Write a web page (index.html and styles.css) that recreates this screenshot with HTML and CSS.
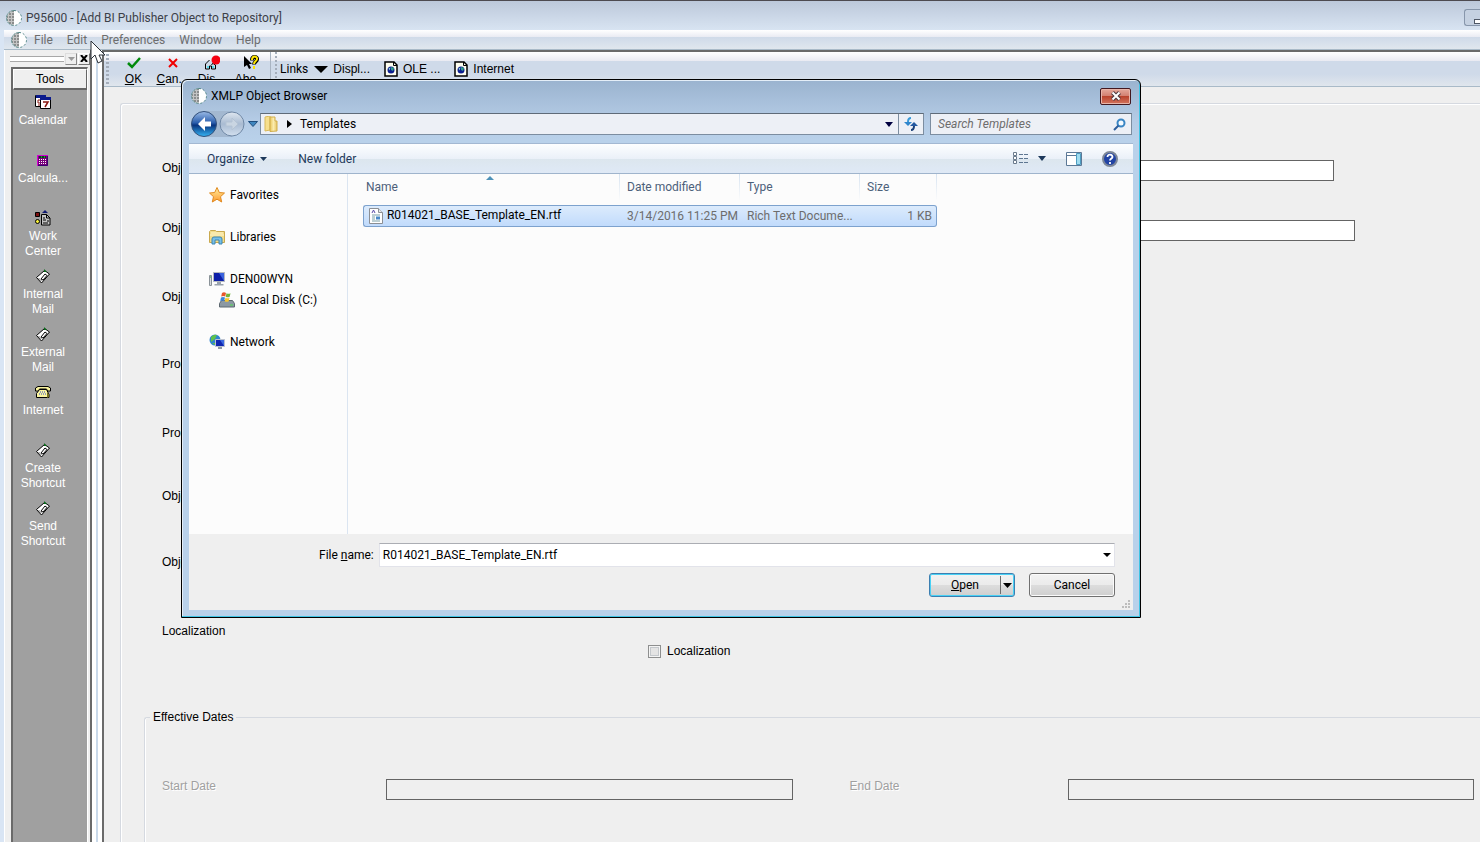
FILE: index.html
```
<!DOCTYPE html>
<html lang="en">
<head>
    <meta charset="UTF-8">
    <meta name="viewport" content="width=device-width, initial-scale=1.0">
    <title>P95600 - [Add BI Publisher Object to Repository]</title>
    <link rel="stylesheet" href="styles.css">
</head>
<body>

    <!-- Shared icons -->
    <svg class="icon-defs" aria-hidden="true">
        <defs>
            <pattern id="dots" width="3" height="3" patternUnits="userSpaceOnUse">
                <rect width="3" height="3" fill="#c4c4c4"/>
                <rect width="2" height="2" fill="#8b8d8d"/>
            </pattern>
            <linearGradient id="blueBall" x1="0" y1="0" x2="0" y2="1">
                <stop offset="0" stop-color="#9bbbe6"/>
                <stop offset="0.45" stop-color="#2b5fae"/>
                <stop offset="0.55" stop-color="#08347f"/>
                <stop offset="1" stop-color="#35b5f5"/>
            </linearGradient>
            <linearGradient id="greyBall" x1="0" y1="0" x2="0" y2="1">
                <stop offset="0" stop-color="#dfe7f0"/>
                <stop offset="0.5" stop-color="#a9bbd2"/>
                <stop offset="1" stop-color="#d3e0ef"/>
            </linearGradient>
            <linearGradient id="starFill" x1="0" y1="0" x2="0" y2="1">
                <stop offset="0" stop-color="#fff0a0"/>
                <stop offset="1" stop-color="#ff9a2e"/>
            </linearGradient>
            <linearGradient id="folderFill" x1="0" y1="0" x2="1" y2="0">
                <stop offset="0" stop-color="#e9c65c"/>
                <stop offset="0.5" stop-color="#fbecae"/>
                <stop offset="1" stop-color="#e6c465"/>
            </linearGradient>
        </defs>
        <symbol id="globe" viewBox="0 0 16 16">
            <circle cx="8" cy="8" r="7.500" fill="#fff"/>
            <path d="M8 .5a7.500 7.500 0 0 0 0 15z" fill="url(#dots)"/>
            <path d="M8 .5a7.500 7.500 0 0 0 0 15" fill="none" stroke="#5f9090" stroke-dasharray="3 1"/>
            <path d="M8 .5a7.500 7.500 0 0 1 0 15" fill="none" stroke="#4f8484" stroke-dasharray="2 2"/>
        </symbol>
        <symbol id="ticket" viewBox="0 0 16 16">
            <path d="M1.500 9.500L9.500 2.500l5 3.500l-8 9z" fill="#fff" stroke="#000"/>
            <path d="M6 11l4-5l2 1.500l-4 4.500z" fill="none" stroke="#000"/>
            <path d="M9 1l3 3h-3z" fill="#0a6a1a"/>
            <path d="M3.500 10l3 3" stroke="#777"/>
        </symbol>
        <symbol id="page" viewBox="0 0 14 16">
            <path d="M1 1h9l3 3v11h-12z" fill="#fffff0" stroke="#000" stroke-width="1.500"/>
            <path d="M9.500 1v3.500h3.500" fill="none" stroke="#000"/>
            <circle cx="7" cy="9" r="3.500" fill="#0c1d8f"/>
            <path d="M7 6l3 1l-1 3l-2-1z" fill="#2fa08a"/>
            <path d="M4.500 7.500l2-1l-1 3z" fill="#8fd4e8"/>
        </symbol>
    </svg>

    <header class="titlebar">
        <svg class="icon16"><use href="#globe"/></svg>
        <h1>P95600 - [Add BI Publisher Object to Repository]</h1>
        <button class="minimize" aria-label="Minimize"><span></span></button>
    </header>

    <nav class="menubar">
        <svg class="icon16"><use href="#globe"/></svg>
        <button>File</button>
        <button>Edit</button>
        <button>Preferences</button>
        <button>Window</button>
        <button>Help</button>
    </nav>

    <div class="workspace">

        <aside class="sidebar">
            <div class="sidebar-top">
                <div class="grip-lines"></div>
                <button class="mini mini-off" aria-label="Options"><svg width="7" height="4"><path d="M0 0h7l-3.500 4z" fill="#9a9a9a"/></svg></button>
                <button class="mini" aria-label="Close tools"><svg width="8" height="7"><path d="M1 0l6 7M7 0l-6 7" stroke="#000" stroke-width="2"/></svg></button>
            </div>
            <div class="tools">
                <button class="tools-title">Tools</button>
                <button class="tool">
                    <svg class="icon16" viewBox="0 0 16 16">
                        <path d="M.5 1.500h10v11h-10z" fill="#fff" stroke="#000"/>
                        <path d="M1 1h10v3h-10z" fill="#0b1a8c"/>
                        <path d="M3 6h3M3 6v3h3v2h-3" stroke="#8b1a12" fill="none"/>
                        <path d="M5.500 4.500h10v10h-10z" fill="#fff" stroke="#000"/>
                        <path d="M5 3h11v3h-11z" fill="#0b1a8c"/>
                        <path d="M8 8h5l-3 5" stroke="#8b1a12" stroke-width="1.500" fill="none"/>
                    </svg>
                    Calendar
                </button>
                <button class="tool">
                    <svg class="icon16" viewBox="0 0 16 16">
                        <path d="M2 3h11v11h-11z" fill="#d400d4"/>
                        <path d="M3 4h9v9h-9z" fill="#7a007a"/>
                        <path d="M12.500 4v9.500h-9.500" fill="none" stroke="#3a0070"/>
                        <path d="M4 4h7v2h-7z" fill="#063d1c"/>
                        <path d="M6 5h1M9 5h1" stroke="#2fe03a"/>
                        <path d="M4 7.500h7M4 9.500h7M4 11.500h7" stroke="#fff" stroke-dasharray="1 1"/>
                    </svg>
                    Calcula...
                </button>
                <button class="tool">
                    <svg class="icon16" viewBox="0 0 16 16">
                        <path d="M.5 2.500h4v4h-4z" fill="#7b0f0f" stroke="#000"/>
                        <circle cx="2.500" cy="11.500" r="2" fill="#f7f03a" stroke="#000"/>
                        <path d="M7 3l3-3l3 3z" fill="#101a70"/>
                        <path d="M6.500 4.500h5l3.500 3.500v7h-8.500z" fill="#c3c3c3" stroke="#000"/>
                        <path d="M11.500 4.500v3.500h3.500M8 8h2M8 10h3M12 11h2M8 13h5" fill="none" stroke="#000"/>
                    </svg>
                    Work Center
                </button>
                <button class="tool"><svg class="icon16"><use href="#ticket"/></svg>Internal Mail</button>
                <button class="tool"><svg class="icon16"><use href="#ticket"/></svg>External Mail</button>
                <button class="tool">
                    <svg class="icon16" viewBox="0 0 16 16">
                        <path d="M3 2.500h10l2.500 1.500v3h-3l-1-2h-7l-1 2h-3v-3z" fill="#fbf5a0" stroke="#000"/>
                        <path d="M4.500 5.500h7l2.500 5v3h-12.500v-4z" fill="#fbf5a0" stroke="#000"/>
                        <path d="M12 8l2 2v3l-2 1z" fill="#777022"/>
                        <path d="M5 8h6M4 10h8" stroke="#2a45d0" stroke-dasharray="1 1"/>
                    </svg>
                    Internet
                </button>
                <button class="tool"><svg class="icon16"><use href="#ticket"/></svg>Create Shortcut</button>
                <button class="tool"><svg class="icon16"><use href="#ticket"/></svg>Send Shortcut</button>
            </div>
        </aside>
        <div class="splitter"></div>

        <main class="main">
            <div class="toolbar">
                <span class="grip"></span>
                <button class="action">
                    <svg class="icon16" viewBox="0 0 16 16"><path d="M2 8l4 4l8-9" fill="none" stroke="#008a0c" stroke-width="2.500"/></svg>
                    <span><u>O</u>K</span>
                </button>
                <button class="action">
                    <svg class="icon16" viewBox="0 0 16 16"><path d="M4 4l8 8M12 4l-8 8" stroke="#f00000" stroke-width="2"/></svg>
                    <span><u>C</u>an...</span>
                </button>
                <button class="action">
                    <svg class="icon16" viewBox="0 0 16 16">
                        <path d="M1.500 9v5h4v-3h2v3h4v-4l-2-1M1.500 9l4-4M7.500 10l4-5" fill="none" stroke="#000"/>
                        <path d="M3 11h2v2h-2zM8 11h2v2h-2z" fill="#55d8e8"/>
                        <circle cx="12" cy="5" r="4.500" fill="#f50010"/>
                    </svg>
                    <span>Dis...</span>
                </button>
                <button class="action">
                    <svg class="icon16" viewBox="0 0 16 16">
                        <path d="M1 1v11l3-2l2 4l2-1l-2-4h3z" fill="#000"/>
                        <path d="M9 5.500c0-5 5.500-4 5-1c0 2-3 2-3 5" fill="none" stroke="#000" stroke-width="4"/>
                        <path d="M9 5c0-5 5.500-4 5-1c0 2-3 2-3 5M11 11v3" fill="none" stroke="#ffe600" stroke-width="2"/>
                    </svg>
                    <span>Abo...</span>
                </button>
                <span class="grip grip-sep"></span>
                <span class="links-label">Links</span>
                <button class="link"><svg width="14" height="7"><path d="M0 0h14l-7 7z"/></svg>Displ...</button>
                <button class="link"><svg width="14" height="16"><use href="#page"/></svg>OLE ...</button>
                <button class="link"><svg width="14" height="16"><use href="#page"/></svg>Internet</button>
            </div>

            <form class="form-panel">
                <div class="fields">
                    <label for="objName">Object</label><input id="objName" class="field field-name" type="text">
                    <label for="objDesc">Object</label><input id="objDesc" class="field field-desc" type="text">
                    <span class="row-label">Object</span>
                    <span class="row-label">Product</span>
                    <span class="row-label">Product</span>
                    <span class="row-label">Object</span>
                    <span class="row-label">Object</span>
                    <span class="row-label">Localization</span>
                </div>
                <div class="check-row">
                    <input type="checkbox" id="localization">
                    <label for="localization">Localization</label>
                </div>
                <fieldset class="dates">
                    <legend>Effective Dates</legend>
                    <div class="date-row">
                        <label for="startDate">Start Date</label><input id="startDate" class="field" type="text" disabled>
                        <label for="endDate">End Date</label><input id="endDate" class="field" type="text" disabled>
                    </div>
                </fieldset>
            </form>
        </main>
    </div>

    <!-- File browser dialog -->
    <section class="dialog" role="dialog" aria-labelledby="dialogTitle">
        <div class="dialog-title">
            <svg class="icon16"><use href="#globe"/></svg>
            <h2 id="dialogTitle">XMLP Object Browser</h2>
            <button class="close" aria-label="Close">
                <svg width="12" height="10" viewBox="0 0 12 10"><path d="M2.500 1.500l7 7M9.500 1.500l-7 7" stroke="#4a3a40" stroke-width="4"/><path d="M2.500 1.500l7 7M9.500 1.500l-7 7" stroke="#fff" stroke-width="2"/></svg>
            </button>
        </div>

        <div class="dialog-nav">
            <div class="history">
                <svg width="56" height="28" viewBox="0 0 56 28">
                    <path d="M14 1h28v26h-28z" fill="#a3b8d0"/>
                    <circle cx="14" cy="14" r="12.500" fill="url(#blueBall)" stroke="#33507a"/>
                    <path d="M15 7l-7 7l7 7v-4.500h6v-5h-6z" fill="#fff"/>
                    <circle cx="42" cy="14" r="12" fill="url(#greyBall)" stroke="#6f88a6"/>
                    <path d="M42 8l6 6l-6 6v-4h-6v-4h6z" fill="#c9d5e2" stroke="#b4c3d4"/>
                </svg>
                <svg width="10" height="6"><path d="M.5 .5h9l-4.500 5z" fill="#3f86bf" stroke="#1f4e7e"/></svg>
            </div>
            <div class="address">
                <svg width="16" height="16" viewBox="0 0 16 16">
                    <path d="M2 1l5-1v14l-5 1z" fill="#f7df8c" stroke="#d9b95a"/>
                    <path d="M7 1h5v4h2v10l-7 .5z" fill="url(#folderFill)" stroke="#d0ae4c"/>
                </svg>
                <svg width="5" height="8"><path d="M0 0l5 4l-5 4z"/></svg>
                <span>Templates</span>
                <svg class="address-arrow" width="8" height="5"><path d="M0 0h8l-4 5z" fill="#000040"/></svg>
                <button class="refresh" aria-label="Refresh">
                    <svg width="14" height="14" viewBox="0 0 14 14">
                        <path d="M7 1c-2 0-3 1-3 4" fill="none" stroke="#3a9ad8" stroke-width="2"/><path d="M0 5h8l-4 4z" fill="#2f86cc"/>
                        <path d="M7 13c2 0 3-1 3-4" fill="none" stroke="#1c3f78" stroke-width="2"/><path d="M6 9h8l-4-4z" fill="#2458a0"/>
                    </svg>
                </button>
            </div>
            <div class="search">
                <input type="text" placeholder="Search Templates" aria-label="Search Templates">
                <svg width="13" height="13" viewBox="0 0 13 13"><circle cx="8" cy="5" r="3.500" fill="#f4faff" stroke="#3a86c4" stroke-width="2"/><path d="M5.500 7.500l-4.500 4.500" stroke="#2d5e9c" stroke-width="2"/></svg>
            </div>
        </div>

        <div class="dialog-body">
            <div class="commands">
                <button>Organize <svg width="7" height="4"><path d="M0 0h7l-3.500 4z" fill="#1e395b"/></svg></button>
                <button>New folder</button>
                <button class="view" aria-label="Change your view">
                    <svg width="15" height="13" viewBox="0 0 15 13">
                        <path d="M.5 .5h3v3h-3zM.5 4.500h3v3h-3zM.5 8.500h3v3h-3z" fill="#fff" stroke="#6a7a8c"/>
                        <path d="M6 2.500h4M11 2.500h4M6 6.500h4M11 6.500h4M6 10.500h4M11 10.500h4" stroke="#5d7691"/>
                    </svg>
                    <svg width="8" height="5"><path d="M0 0h8l-4 5z" fill="#1e395b"/></svg>
                </button>
                <button aria-label="Preview pane">
                    <svg width="16" height="14" viewBox="0 0 16 14"><path d="M.5 .5h15v13h-15z" fill="#fff" stroke="#5c7896"/><path d="M1 3.500h9" stroke="#5c7896"/><path d="M10.500 1.500h4v11h-4z" fill="#9fdcf0" stroke="#4d9cc0"/></svg>
                </button>
                <button aria-label="Help">
                    <svg width="16" height="16" viewBox="0 0 16 16"><circle cx="8" cy="8" r="7" fill="#2143a4" stroke="#7d8798" stroke-width="2"/><path d="M5.500 6c0-3.500 5-3 5 0c0 1.500-2.500 1.500-2.500 3.500M8 11v2" fill="none" stroke="#fff" stroke-width="1.800"/></svg>
                </button>
            </div>

            <div class="panes">
                <ul class="tree">
                    <li>
                        <svg class="icon16" viewBox="0 0 16 16"><path d="M8 .5l2.300 5l5.200.5l-4 3.700l1.200 5.300l-4.700-2.800l-4.700 2.800l1.200-5.300l-4-3.700l5.200-.5z" fill="url(#starFill)" stroke="#e08a20"/></svg>
                        <a href="#">Favorites</a>
                    </li>
                    <li>
                        <svg class="icon16" viewBox="0 0 16 16">
                            <path d="M.5 2.500l1-1h5l1 1h8v11h-15z" fill="#f3dc8a" stroke="#c9a94e"/>
                            <path d="M2 4h12M1 6h14" stroke="#fff6cf"/>
                            <path d="M3 15v-5q0-2 2-2h6q2 0 2 2v5h-3v-4h-4v4z" fill="#79bfe6" stroke="#3c86b4"/>
                        </svg>
                        <a href="#">Libraries</a>
                    </li>
                    <li>
                        <svg class="icon16" viewBox="0 0 16 16">
                            <path d="M.5 4.500h2v10h-2z" fill="#d5d9dc" stroke="#8a9298"/><path d="M1 6h1" stroke="#36b836"/>
                            <path d="M4.500 1.500h11v9h-11z" fill="#0d1fa8" stroke="#b5b9c0"/>
                            <path d="M10 2h5v8z" fill="#3a62dd"/>
                            <path d="M8 11h4v2h-4zM5.500 13h9v1.500h-9z" fill="#9aa3ad"/>
                        </svg>
                        <a href="#">DEN00WYN</a>
                    </li>
                    <li class="child">
                        <svg class="icon16" viewBox="0 0 16 16">
                            <path d="M2.500 8.500h11l2 3v3.500h-15v-3.500z" fill="#8b98a3" stroke="#5d6870"/><path d="M11 13h3" stroke="#4fe04f"/>
                            <path d="M3 1q2-1.500 4 0l-.8 3.500q-2-1-4 0z" fill="#e8562a"/><path d="M7.500 1.200q2 1 4 0l-.8 3.500q-2 1-4 0z" fill="#74b53a"/>
                            <path d="M2 5.500q2-1 4 0l-.8 3.500q-2-1-4 0z" fill="#3e86d8"/><path d="M6.500 5.700q2 1 4 0l-.8 3.500q-2 1-4 0z" fill="#f8c52c"/>
                        </svg>
                        <a href="#">Local Disk (C:)</a>
                    </li>
                    <li>
                        <svg class="icon16" viewBox="0 0 16 16">
                            <circle cx="6" cy="6" r="5.500" fill="#2f83d0"/><path d="M2 3q3-3 6-2l-2 4l-4 3zM3 9l4 0l-1 2z" fill="#5fc24a"/>
                            <path d="M6.500 5.500h9v7h-9z" fill="#1026b0" stroke="#bcc3cf"/><path d="M11 6h4v6z" fill="#3c6ae0"/><path d="M9 13h4v2h-4z" fill="#8f99a5"/>
                        </svg>
                        <a href="#">Network</a>
                    </li>
                </ul>

                <div class="files">
                    <table>
                        <colgroup><col><col class="col-date"><col class="col-type"><col class="col-size"></colgroup>
                        <thead>
                            <tr>
                                <th class="sorted">Name</th>
                                <th>Date modified</th>
                                <th>Type</th>
                                <th>Size</th>
                            </tr>
                        </thead>
                        <tbody>
                            <tr class="selected">
                                <td>
                                    <svg width="14" height="16" viewBox="0 0 14 16">
                                        <path d="M.5 .5h9l4 4v11h-13z" fill="#fff" stroke="#8c8f94"/><path d="M9.500 .5v4h4" fill="#e3e6ea" stroke="#8c8f94"/>
                                        <path d="M3 5l1.500-3l1.500 3" fill="none" stroke="#5a4aa8"/><path d="M3 7h8M3 9h3M3 11h3M3 13h8" stroke="#7aa0a8"/><path d="M7 8.500h4v3h-4z" fill="#4a8ac8"/>
                                    </svg>
                                    R014021_BASE_Template_EN.rtf
                                </td>
                                <td>3/14/2016 11:25 PM</td>
                                <td>Rich Text Docume...</td>
                                <td>1 KB</td>
                            </tr>
                        </tbody>
                    </table>
                </div>
            </div>

            <div class="footer">
                <div class="name-row">
                    <label for="fileName">File <u>n</u>ame:</label>
                    <div class="combo">
                        <input type="text" id="fileName" value="R014021_BASE_Template_EN.rtf">
                        <svg width="8" height="4"><path d="M0 0h8l-4 4z"/></svg>
                    </div>
                </div>
                <div class="buttons">
                    <div class="split">
                        <button class="open"><u>O</u>pen</button>
                        <button class="open-more" aria-label="More open options"><svg width="9" height="5"><path d="M0 0h9l-4.500 5z"/></svg></button>
                    </div>
                    <button class="cancel">Cancel</button>
                </div>
                <svg class="resize" width="9" height="9"><path d="M6 1h2M3 4h2M6 4h2M0 7h2M3 7h2M6 7h2" stroke="#bdbdbd" stroke-width="2"/></svg>
            </div>
        </div>
    </section>

    <svg class="cursor" width="16" height="25" viewBox="0 0 16 25"><path d="M1 1v18l4-4l3 8l4-2l-3-6h6z" fill="#fff" stroke="#2a3038"/></svg>

</body>
</html>
```
FILE: styles.css
```
* {
    box-sizing: border-box;
}

body {
    margin: 0;
    height: 100vh;
    display: flex;
    flex-direction: column;
    background: #d9e5f4;
    font-family: "Liberation Sans", Arial, sans-serif;
    font-size: 12px;
    color: #000;
}

button {
    margin: 0;
    padding: 0;
    border: 0;
    background: none;
    font: inherit;
    color: inherit;
}

input {
    font: inherit;
}

svg {
    display: block;
    flex: none;
}

.icon-defs {
    position: absolute;
    width: 0;
    height: 0;
}

.icon16 {
    width: 16px;
    height: 16px;
}

/* Application window */
.titlebar {
    flex: none;
    display: flex;
    align-items: center;
    height: 30px;
    padding: 4px 0 0 6px;
    gap: 4px;
    border-top: 1px solid #4d4a50;
    background: linear-gradient(#bcc8da, #d8e4f2);
}

.titlebar h1 {
    flex: 1;
    margin: 0;
    font-family: Roboto, "Open Sans", sans-serif;
    font-size: 12px;
    font-weight: normal;
    color: #3c4048;
}

.minimize {
    width: 16px;
    height: 17px;
    padding: 8px 0 0 9px;
    border: 1px solid #8796ab;
    border-right: 0;
    border-radius: 3px 0 0 3px;
    background: #c5d1e1;
}

.minimize span {
    display: block;
    height: 5px;
    border: 1px solid #4f5866;
    border-right: 0;
    background: #fff;
}

.menubar {
    flex: none;
    display: flex;
    align-items: center;
    height: 20px;
    margin-left: 4px;
    padding-left: 7px;
    border-bottom: 1px solid #a9bac8;
    background: linear-gradient(#fff, #e9ebf3 7px, #cfdae9 7px, #e0e7ee);
    font-family: Roboto, "Open Sans", sans-serif;
    color: #6d6d6d;
}

.menubar button {
    margin-right: 14px;
}

.menubar svg {
    margin-right: 7px;
}

.workspace {
    flex: 1;
    display: flex;
    min-height: 0;
    margin-left: 4px;
    background: #efefef;
}

.sidebar {
    display: flex;
    flex-direction: column;
    width: 88px;
    padding: 0 2px 0 6px;
    border-left: 1px solid #fff;
    border-right: 2px solid #6a6a6a;
}

.sidebar-top {
    display: flex;
    align-items: center;
    justify-content: flex-end;
    gap: 1px;
    height: 17px;
    margin: 0 -2px 0 -1px;
}

.grip-lines {
    flex: 1;
    height: 6px;
    border: solid #a8a8a8;
    border-width: 1px 0;
    background: #fff;
}

.mini {
    display: flex;
    align-items: center;
    justify-content: center;
    width: 12px;
    height: 12px;
    border: 1px solid;
    border-color: #fff #777 #777 #fff;
    background: #efefef;
}

.mini-off {
    border-color: #ddd #888 #888 #ddd;
}

.tools {
    flex: 1;
    border: solid;
    border-width: 2px 1px 0 2px;
    border-color: #6a6a6a #fff;
    border-left-color: #6a6a6a;
    background: #a0a0a0;
    color: #fff;
}

.tools-title {
    display: block;
    width: 100%;
    height: 21px;
    border: 1px solid #fff;
    border-right-color: #666;
    border-bottom: 2px solid #666;
    background: #efefef;
    color: #000;
}

.tool {
    display: flex;
    flex-direction: column;
    align-items: center;
    gap: 3px;
    width: 60px;
    height: 58px;
    padding: 4px 4px 0;
    line-height: 15px;
}

.splitter {
    width: 10px;
    border-left: 4px solid #fff;
    border-right: 4px solid #fff;
    background: #c9d9ea;
}

.main {
    flex: 1;
    display: flex;
    flex-direction: column;
    min-width: 0;
    border-top: 2px solid #6a6a6a;
    border-left: 2px solid #6a6a6a;
}

.toolbar {
    flex: none;
    display: flex;
    align-items: center;
    height: 35px;
    padding-left: 2px;
    overflow: hidden;
    border-bottom: 1px solid #a9bac8;
    background: linear-gradient(#fff, #e9eaf2 9px, #cfdae9 9px, #cfdae9 22px, #e0e6ed);
}

.grip {
    width: 3px;
    height: 30px;
    margin-right: 5px;
    background: repeating-linear-gradient(#a4adba 0, #a4adba 2px, transparent 2px, transparent 4px);
}

.grip-sep {
    width: 7px;
    height: 34px;
    margin-right: 3px;
    border-left: 1px solid #a9b4c2;
    background-position: 4px 0;
    background-size: 3px 100%;
    background-repeat: no-repeat;
}

.action {
    display: flex;
    flex-direction: column;
    align-items: center;
    flex: none;
    width: 39px;
    margin-top: 4px;
    line-height: 16px;
}

.links-label {
    margin-right: 6px;
    font-family: Roboto, "Open Sans", sans-serif;
}

.link {
    display: flex;
    align-items: center;
    gap: 5px;
    margin-right: 14px;
}

/* Entry form */
.form-panel {
    flex: 1;
    display: flex;
    flex-direction: column;
    min-height: 0;
    margin: 16px 0 0 16px;
    border-top: 1px solid #d5d9e0;
    border-left: 1px solid #d5d9e0;
    border-radius: 3px 0 0 0;
    box-shadow: inset 1px 1px #fff;
}

.fields {
    display: grid;
    grid-template-columns: 224px 1fr;
    grid-template-rows: 60px 69px 67px 69px 63px 66px 69px 20px;
    padding: 57px 0 0 41px;
    line-height: 15px;
}

.row-label {
    grid-column: 1 / -1;
}

.field {
    height: 21px;
    border: 1px solid #646464;
    border-radius: 0;
    background: #fff;
}

.fields .field {
    margin-top: -1px;
}

.fields .field-name {
    margin-right: 146px;
}

.fields .field-desc {
    margin-right: 125px;
}

.field:disabled {
    background: #efefef;
}

.check-row {
    display: flex;
    align-items: center;
    gap: 6px;
    padding-left: 527px;
}

.check-row input {
    appearance: none;
    width: 13px;
    height: 13px;
    margin: 0;
    border: 1px solid #8e8f8f;
    background: #e4e4e4;
    box-shadow: inset 0 0 0 1px #f4f4f4, inset 0 0 0 2px #c4c8cc;
}

.dates {
    flex: 1;
    margin: 52px 0 0 23px;
    padding: 55px 6px 0 17px;
    border: 1px solid #d5d9e0;
    border-width: 1px 0 0 1px;
    border-radius: 3px 0 0 0;
    box-shadow: inset 1px 0 #fff;
}

.dates legend {
    margin-left: -12px;
    padding: 0 3px;
}

.date-row {
    display: grid;
    grid-template-columns: 224px 1fr 275px 1fr;
    line-height: 15px;
    color: #a0a0a0;
    text-shadow: 1px 1px #fff;
}

.date-row label:nth-of-type(2) {
    padding-left: 57px;
}

/* File browser dialog */
.dialog {
    position: absolute;
    top: 79px;
    left: 181px;
    right: 339px;
    padding: 0 7px 7px;
    border: 1px solid #000;
    border-radius: 6px 6px 0 0;
    background: linear-gradient(#9ab3cf, #b4cbe5 40px, #b9d1ea 60px);
    box-shadow: inset -1px -1px #3fc4e4, inset 1px 1px #e4eef8;
    font-family: Roboto, "Open Sans", sans-serif;
}

.dialog-title {
    display: flex;
    align-items: center;
    gap: 4px;
    height: 32px;
    padding-left: 2px;
}

.dialog-title h2 {
    flex: 1;
    margin: 0;
    font-size: 12px;
    font-weight: normal;
}

.close {
    display: flex;
    align-items: center;
    justify-content: center;
    width: 31px;
    height: 17px;
    margin-right: 2px;
    border: 1px solid #43181f;
    border-radius: 2px;
    background: linear-gradient(#e5a99c, #d27f70 7px, #b8402a 7px, #d3755e);
    box-shadow: inset 0 0 0 1px #e8b4a8;
}

.dialog-nav {
    display: flex;
    align-items: center;
    height: 24px;
    margin-bottom: 7px;
}

.history {
    display: flex;
    align-items: center;
    gap: 2px;
    margin: 0 2px 0 1px;
}

.address,
.search {
    display: flex;
    align-items: center;
    height: 22px;
    border: 1px solid #7c8da0;
    border-top-color: #5f6b78;
    background: #edf0f6;
}

.address {
    flex: 1;
    gap: 8px;
    margin-right: 6px;
    padding-left: 2px;
}

.address-arrow {
    margin-left: auto;
}

.refresh {
    display: flex;
    align-items: center;
    justify-content: center;
    align-self: stretch;
    width: 25px;
    margin-left: -3px;
    border-left: 1px solid #7c8da0;
}

.search {
    width: 202px;
    margin-right: 1px;
    padding: 0 5px 0 7px;
}

.search input {
    flex: 1;
    min-width: 0;
    padding: 0;
    border: 0;
    background: none;
    font-style: italic;
}

.search input::placeholder {
    color: #6d6d6d;
    opacity: 1;
}

.dialog-body {
    background: #fcfcfc;
}

.commands {
    display: flex;
    align-items: center;
    height: 31px;
    padding: 0 15px 0 18px;
    gap: 20px;
    border-top: 1px solid #a3b8d2;
    border-bottom: 1px solid #9fb4cc;
    background: linear-gradient(#fdfeff, #eaf0f8 15px, #dce6ee 15px, #dfe9f6);
    color: #1e395b;
}

.commands button {
    display: flex;
    align-items: center;
    gap: 6px;
}

.commands button:nth-child(2) {
    margin-left: 11px;
}

.commands .view {
    gap: 10px;
    margin-left: auto;
}

.panes {
    display: flex;
    height: 360px;
}

.tree {
    width: 159px;
    margin: 0;
    padding: 10px 0 0 20px;
    list-style: none;
    border-right: 1px solid #dbe5f1;
}

.tree li {
    display: flex;
    align-items: center;
    gap: 5px;
    height: 21px;
    margin-bottom: 21px;
}

.tree li:nth-child(3) {
    margin-bottom: 0;
}

.tree .child {
    padding-left: 10px;
}

.tree a {
    color: #000;
    text-decoration: none;
}

.files {
    flex: 1;
    padding-left: 15px;
}

.files table {
    width: 574px;
    table-layout: fixed;
    border-spacing: 0;
}

.col-date,
.col-type {
    width: 120px;
}

.col-size {
    width: 77px;
}

.files th {
    height: 26px;
    padding: 0 3px 0 7px;
    border-right: 1px solid;
    border-image: linear-gradient(#d5e2f0, #fcfcfc) 1;
    font-weight: normal;
    text-align: left;
    color: #4c607a;
}

.files th:first-child {
    padding-left: 3px;
}

.sorted {
    position: relative;
}

.sorted::after {
    content: "";
    position: absolute;
    top: 2px;
    left: 48%;
    border: 4px solid transparent;
    border-top: 0;
    border-bottom-color: #4f92b8;
}

.files thead::after {
    content: "";
    display: block;
    height: 5px;
}

.selected td {
    height: 22px;
    padding: 0 0 0 7px;
    border: solid #7da2ce;
    border-width: 1px 0;
    background: linear-gradient(#dcebfc, #c1dbfc);
    white-space: nowrap;
    color: #6d6d6d;
}

.selected td:first-child {
    padding-left: 5px;
    border-left-width: 1px;
    border-radius: 3px 0 0 3px;
    color: #000;
}

.selected td:last-child {
    padding-right: 4px;
    border-right-width: 1px;
    border-radius: 0 3px 3px 0;
    text-align: right;
}

.selected svg {
    display: inline-block;
    margin-right: 1px;
    vertical-align: middle;
}

.footer {
    position: relative;
    height: 76px;
    padding: 9px 18px 0 130px;
    background: #efefef;
}

.name-row {
    display: flex;
    align-items: center;
    gap: 5px;
}

.combo {
    flex: 1;
    display: flex;
    align-items: center;
    height: 24px;
    padding: 0 3px;
    border: 1px solid #e2e3ea;
    border-top-color: #abadb3;
    background: #fff;
}

.combo input {
    flex: 1;
    padding: 0;
    border: 0;
    outline: 0;
}

.buttons {
    display: flex;
    justify-content: flex-end;
    gap: 14px;
    margin-top: 6px;
}

.split,
.cancel {
    width: 86px;
    height: 24px;
    border: 1px solid #707070;
    border-radius: 3px;
    background: linear-gradient(#f2f2f2, #ebebeb 11px, #dddddd 11px, #cfcfcf);
    box-shadow: inset 0 0 0 1px #fbfbfb;
}

.split {
    display: flex;
    align-items: center;
    border-color: #3c7fb1;
    box-shadow: inset 0 0 0 1px #48d1f5;
}

.open {
    flex: 1;
}

.open-more {
    display: flex;
    align-items: center;
    justify-content: center;
    width: 14px;
    height: 18px;
    border-left: 1px solid #6d6d6d;
}

.resize {
    position: absolute;
    right: 2px;
    bottom: 1px;
}

.cursor {
    position: absolute;
    top: 40px;
    left: 90px;
}
```
